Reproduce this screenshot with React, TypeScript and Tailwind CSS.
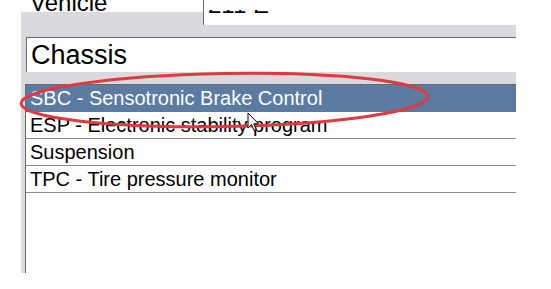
const font = { fontFamily: '"Liberation Sans", Arial, sans-serif' };

const systems = [
  "SBC - Sensotronic Brake Control",
  "ESP - Electronic stability program",
  "Suspension",
  "TPC - Tire pressure monitor",
];

function Cursor() {
  return (
    <svg className="absolute left-[247px] top-[112px]" width="13" height="20" viewBox="0 0 13 20">
      <path d="M1 1 L1 16 L4.5 12.5 L7 18.5 L9.2 17.6 L6.8 11.8 L11.5 11.8 Z" fill="white" stroke="black" strokeWidth="1" strokeLinejoin="miter" />
    </svg>
  );
}

function Highlight() {
  return (
    <svg className="pointer-events-none absolute left-0 top-0" width="551" height="289" viewBox="0 0 551 289">
      <ellipse
        cx="224.5"
        cy="100"
        rx="203.5"
        ry="26.5"
        fill="none"
        stroke="#e2383f"
        strokeWidth="3"
        transform="rotate(-1 224.5 100)"
      />
    </svg>
  );
}

export default function App() {
  return (
    <div className="relative h-[289px] w-[551px] overflow-hidden bg-white text-black" style={font}>
      <div className="ml-[21px] flex w-[495px] flex-col">
        {/* vehicle row, cut off at the top */}
        <div className="flex h-[25px]">
          <div className="w-[182px] overflow-hidden bg-[linear-gradient(to_bottom,#ffffff_12px,#dadade_12px)] pl-[9px]">
            <div className="-mt-[9px] text-[24px] leading-none">Vehicle</div>
          </div>
          <div className="flex flex-1 flex-col border-l border-[#6a6a6a] bg-white pl-[4px]">
            <div className="mt-[10px] h-[3px] overflow-hidden">
              <div className="-mt-[17px] text-[24px] leading-none">211 E</div>
            </div>
          </div>
        </div>

        {/* group field */}
        <div className="bg-[#dadade] pb-[12px] pl-[5px] pt-[12px]">
          <div className="h-[35px] border-l border-t border-[#6a6a6a] bg-white pl-[4px] text-[27px] leading-[34px]">
            Chassis
          </div>
        </div>

        {/* system list */}
        <div className="flex h-[189px] bg-[#dcdcde] pl-[4px]">
          <div className="flex-1 border-l border-t border-[#6a6a6a] bg-white">
            {systems.map((name, i) => (
              <div
                key={name}
                className={
                  i === 0
                    ? "h-[27px] border-b border-[#5b7ba3] bg-[#5b7ba3] pl-[4px] text-[20px] leading-[26px] text-white"
                    : "h-[27px] border-b border-[#8c8c8c] pl-[4px] text-[20px] leading-[26px]"
                }
              >
                {name}
              </div>
            ))}
          </div>
        </div>
      </div>

      <Highlight />
      <Cursor />
    </div>
  );
}
